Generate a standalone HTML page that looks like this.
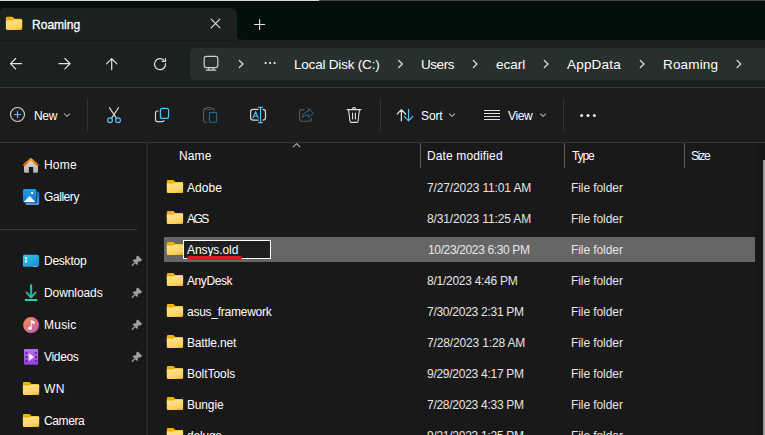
<!DOCTYPE html>
<html><head><meta charset="utf-8"><title>Roaming</title>
<style>
html,body{margin:0;padding:0;background:#191919;}
body{width:765px;height:435px;position:relative;overflow:hidden;font-family:"Liberation Sans", sans-serif;color:#fff;}
.abs{position:absolute;}
.t{position:absolute;white-space:nowrap;line-height:1;}
</style></head><body>
<div class="abs" style="left:0;top:0;width:765px;height:40px;background:#020f0b;"></div>
<div class="abs" style="left:0;top:1px;width:319px;height:1px;background:#010302;"></div>
<div class="abs" style="left:0;top:8px;width:237px;height:32px;background:#1a211e;border-radius:4px 6px 0 0;"></div>
<div class="abs" style="left:237px;top:36px;width:4px;height:4px;background:radial-gradient(circle at 100% 0,#020f0b 3.5px,#1a211e 4.5px);"></div>
<div class="abs" style="left:0;top:0;width:319px;height:1px;background:#d8d8da;"></div>
<div class="abs" style="left:319px;top:0;width:446px;height:1px;background:#484848;"></div>
<div class="abs" style="left:0;top:40px;width:765px;height:47px;background:#1a211e;"></div>
<div class="abs" style="left:0;top:40px;width:238px;height:1px;background:#131b18;"></div>
<div class="abs" style="left:190px;top:48px;width:585px;height:32px;background:#28302d;border-radius:5px;"></div>
<div class="abs" style="left:0;top:87px;width:765px;height:1px;background:#3a3c3b;"></div>
<div class="abs" style="left:0;top:88px;width:765px;height:54px;background:#1c1c1c;"></div>
<div class="abs" style="left:0;top:142px;width:765px;height:1px;background:#353535;"></div>
<div class="abs" style="left:0;top:143px;width:765px;height:292px;background:#191919;"></div>
<div class="abs" style="left:145px;top:143px;width:1px;height:292px;background:#131313;"></div>
<div class="abs" style="left:146px;top:143px;width:2px;height:292px;background:#272727;"></div>
<div class="abs" style="left:0;top:229px;width:137px;height:1px;background:#3a3a3a;"></div>
<div class="abs" style="left:420px;top:143px;width:1px;height:25px;background:#5a5a5a;"></div>
<div class="abs" style="left:564px;top:143px;width:1px;height:25px;background:#5a5a5a;"></div>
<div class="abs" style="left:684px;top:143px;width:1px;height:25px;background:#5a5a5a;"></div>
<div class="abs" style="left:164px;top:237px;width:591px;height:25px;background:#666666;"></div>
<div class="abs" style="left:755px;top:143px;width:10px;height:292px;background:#171717;"></div>
<div class="abs" style="left:763px;top:160px;width:2px;height:275px;background:#9c9c9c;"></div>
<div class="abs" style="left:183px;top:240px;width:86px;height:17px;border:1px solid #fff;background:#1f1f1f;"></div>
<svg class="abs" style="left:0;top:0" width="765" height="435" viewBox="0 0 765 435" fill="none" stroke-linecap="round" stroke-linejoin="round">
<defs>
<linearGradient id="fTab" x1="0" y1="0" x2="0" y2="1"><stop offset="0" stop-color="#f5b400"/><stop offset="1" stop-color="#e9a600"/></linearGradient>
<linearGradient id="fBody" x1="0.2" y1="0" x2="0.6" y2="1"><stop offset="0" stop-color="#ffe597"/><stop offset="0.88" stop-color="#ffd158"/><stop offset="1" stop-color="#f3b637"/></linearGradient>
<linearGradient id="gRoof" x1="0" y1="0" x2="0" y2="1"><stop offset="0" stop-color="#ff9d1c"/><stop offset="1" stop-color="#e8620a"/></linearGradient>
<linearGradient id="gHouse" x1="0" y1="0" x2="0" y2="1"><stop offset="0" stop-color="#dedede"/><stop offset="1" stop-color="#b2b2b2"/></linearGradient>
<linearGradient id="gGal" x1="0" y1="0" x2="0" y2="1"><stop offset="0" stop-color="#22a0ea"/><stop offset="1" stop-color="#1273d0"/></linearGradient>
<linearGradient id="gGalB" x1="0" y1="0" x2="0" y2="1"><stop offset="0" stop-color="#1668c8"/><stop offset="1" stop-color="#4a9dea"/></linearGradient>
<linearGradient id="gDesk" x1="0" y1="0" x2="1" y2="1"><stop offset="0" stop-color="#35cdee"/><stop offset="1" stop-color="#1687cf"/></linearGradient>
<linearGradient id="gDl" x1="0" y1="0" x2="0" y2="1"><stop offset="0" stop-color="#30d0a0"/><stop offset="0.75" stop-color="#1fa8a8"/><stop offset="1" stop-color="#2fd0a0"/></linearGradient>
<linearGradient id="gMus" x1="0" y1="0" x2="1" y2="1"><stop offset="0.1" stop-color="#f28e55"/><stop offset="0.9" stop-color="#c45cb4"/></linearGradient>
<linearGradient id="gVid" x1="0" y1="0" x2="0" y2="1"><stop offset="0" stop-color="#b774f2"/><stop offset="1" stop-color="#9240da"/></linearGradient>
</defs>
<g transform="translate(5.9,16.8)">
<path d="M0 1.4 Q0 0 1.4 0 H6 Q6.7 0 7.2 .5 L8.6 2 H14.9 Q16.3 2 16.3 3.4 V6 H0 Z" fill="url(#fTab)"/>
<path d="M0 3.7 H5.8 Q6.6 3.7 7.2 3.3 L7.8 2.95 Q8.3 2.7 9 2.7 H15 Q16.3 2.7 16.3 4 V11.8 Q16.3 13.1 15 13.1 H1.3 Q0 13.1 0 11.8 Z" fill="url(#fBody)"/>
</g>
<path d="M211.2 19.2 L219.9 27.9 M219.9 19.2 L211.2 27.9" stroke="#e4e4e4" stroke-width="1.1"/>
<path d="M254.6 24.5 H264.6 M259.6 19.5 V29.5" stroke="#e4e4e4" stroke-width="1.1"/>
<g stroke="#e4e4e4" stroke-width="1.2">
<path d="M21.6 63.6 H10.6 M15.6 58.5 L10.5 63.6 L15.6 68.9"/>
<path d="M58.9 63.6 H70 M64.9 58.5 L70.1 63.6 L64.9 68.9"/>
<path d="M111.7 69.7 V58.8 M106.5 63.8 L111.7 58.6 L116.9 63.8"/>
<path d="M165.5 63.7 A5.5 5.5 0 1 1 163.9 60.2"/>
<path d="M165.5 58.3 V61.3 H161.6" stroke-linecap="butt"/>
</g>
<g stroke="#cfcfcf" stroke-width="1.2"><rect x="204.2" y="56.4" width="13.6" height="11.2" rx="2"/><path d="M206.2 70.1 H215.8 M208.8 67.8 V70 M213.2 67.8 V70"/></g>
<path d="M239.3 60.5 L243 64 L239.3 67.5" stroke="#dcdcdc" stroke-width="1.2"/>
<path d="M398.7 60.5 L402.4 64 L398.7 67.5" stroke="#dcdcdc" stroke-width="1.2"/>
<path d="M473.3 60.5 L477 64 L473.3 67.5" stroke="#dcdcdc" stroke-width="1.2"/>
<path d="M544.3 60.5 L548 64 L544.3 67.5" stroke="#dcdcdc" stroke-width="1.2"/>
<path d="M640.3 60.5 L644 64 L640.3 67.5" stroke="#dcdcdc" stroke-width="1.2"/>
<path d="M737.0999999999999 60.5 L740.8 64 L737.0999999999999 67.5" stroke="#dcdcdc" stroke-width="1.2"/>
<rect x="264.6" y="61.9" width="2" height="2" rx=".6" fill="#e8e8e8"/>
<rect x="269.1" y="61.9" width="2" height="2" rx=".6" fill="#e8e8e8"/>
<rect x="273.6" y="61.9" width="2" height="2" rx=".6" fill="#e8e8e8"/>
<circle cx="17.5" cy="114.5" r="7" stroke="#d6d6d6" stroke-width="1.1"/>
<path d="M14.5 114.5 H20.5 M17.5 111.5 V117.5" stroke="#4cc2ff" stroke-width="1.2"/>
<path d="M64.4 113.8 L67 116.4 L69.6 113.8" stroke="#a8a8a8" stroke-width="1.1"/>
<path d="M449.4 113.8 L452 116.4 L454.6 113.8" stroke="#a8a8a8" stroke-width="1.1"/>
<path d="M540.4 113.8 L543 116.4 L545.6 113.8" stroke="#a8a8a8" stroke-width="1.1"/>
<rect x="87" y="99" width="1" height="32" fill="#333333"/>
<rect x="380" y="99" width="1" height="32" fill="#333333"/>
<rect x="563" y="99" width="1" height="32" fill="#333333"/>
<path d="M109.4 107.6 L116.6 118.4 M118.6 107.6 L111.4 118.4" stroke="#d6d6d6" stroke-width="1.1"/>
<circle cx="110" cy="120.2" r="2.4" stroke="#4cc2ff" stroke-width="1.2"/><circle cx="118" cy="120.2" r="2.4" stroke="#4cc2ff" stroke-width="1.2"/>
<path d="M158 111 H157.4 Q155.5 111 155.5 113 V119.5 Q155.5 121.6 157.6 121.6 H162 Q164 121.6 164 120.4" stroke="#d6d6d6" stroke-width="1.2"/>
<rect x="160.4" y="108.4" width="8.2" height="10" rx="2" stroke="#4cc2ff" stroke-width="1.2"/>
<path d="M206.4 108.6 H205.2 Q203.6 108.6 203.6 110.2 V120.6 Q203.6 122.2 205.2 122.2 H207 M211.6 108.6 H212.8 Q214.4 108.6 214.4 110.2" stroke="#5c5c5c" stroke-width="1.1"/>
<rect x="206.4" y="107.4" width="5.2" height="2.2" rx="1.1" stroke="#5c5c5c" stroke-width="1"/>
<rect x="209.4" y="112.4" width="7.2" height="9.9" rx="1.4" stroke="#236a8e" stroke-width="1.1"/>
<path d="M258 109.4 H253.2 Q250.6 109.4 250.6 112 V117.6 Q250.6 120.2 253.2 120.2 H258 M263 109.4 Q265.5 109.4 265.5 112 V117.6 Q265.5 120.2 263 120.2" stroke="#d6d6d6" stroke-width="1.2"/>
<path d="M260.5 107.6 V122.4 M258.6 107.4 H262.4 M258.6 122.6 H262.4" stroke="#4cc2ff" stroke-width="1.2"/>
<path d="M253 118 L255.6 111.6 L258.2 118 M253.9 116 H257.3" stroke="#4cc2ff" stroke-width="1.1"/>
<path d="M304 109.6 H301.8 Q299.6 109.6 299.6 111.8 V119 Q299.6 121.3 301.8 121.3 H309 Q311.3 121.3 311.3 119 V118" stroke="#585858" stroke-width="1.1"/>
<path d="M308.6 108.6 L313.4 112.9 L308.6 117.4 V114.8 Q304.5 114.6 302.2 117.6 Q303 112 308.6 111.2 Z" stroke="#236a8e" stroke-width="1"/>
<g stroke="#e0e0e0" stroke-width="1.1"><path d="M347 109.6 H361 M352.4 109.4 Q352.4 107.6 354 107.6 Q355.6 107.6 355.6 109.4"/><path d="M348.6 110 L349.9 121 Q350 122.4 351.4 122.4 H356.6 Q358 122.4 358.1 121 L359.4 110"/><path d="M352.6 113 V119 M355.4 113 V119"/></g>
<path d="M401.4 120.8 V109.8 M397.2 114 L401.4 109.6 L405.6 114" stroke="#e0e0e0" stroke-width="1.2"/>
<path d="M408.6 109.4 V120.6 M404.4 116.4 L408.6 120.8 L412.8 116.4" stroke="#4cc2ff" stroke-width="1.2"/>
<rect x="484" y="110.0" width="16" height="1" fill="#e0e0e0"/>
<rect x="484" y="113.0" width="16" height="1" fill="#e0e0e0"/>
<rect x="484" y="116.0" width="16" height="1" fill="#e0e0e0"/>
<rect x="484" y="119.0" width="16" height="1" fill="#e0e0e0"/>
<circle cx="581.6" cy="115.6" r="1.5" fill="#f0f0f0"/>
<circle cx="588" cy="115.6" r="1.5" fill="#f0f0f0"/>
<circle cx="594.4" cy="115.6" r="1.5" fill="#f0f0f0"/>
<path d="M293.3 146.9 L296.6 143.6 L299.9 146.9" stroke="#b0b0b0" stroke-width="1.1"/>
<path d="M24 165 L31 159 L38 165 V171.6 Q38 172.8 36.8 172.8 H33.2 V167 H28.9 V172.8 H25.2 Q24 172.8 24 171.6 Z" fill="url(#gHouse)" stroke="none"/>
<path d="M24.1 165.1 L30.9 159 L37.8 165.1" stroke="url(#gRoof)" stroke-width="2.1" stroke-linecap="round"/>
<rect x="25.6" y="191.4" width="13.6" height="13.6" rx="1.6" fill="url(#gGalB)"/>
<rect x="22.4" y="188.4" width="14.6" height="14.6" rx="2" fill="#141414"/>
<rect x="22.9" y="188.9" width="13.6" height="13.4" rx="1.6" fill="url(#gGal)"/>
<path d="M23.6 202.2 L29.5 195.8 L35.6 202.2 Z" fill="#f4f9ff" stroke="none"/>
<rect x="31" y="192" width="2" height="2" fill="#fff"/>
<rect x="22.9" y="254.8" width="16.1" height="12" rx="1.6" fill="url(#gDesk)"/>
<rect x="25" y="257.2" width="2" height="2" fill="#fff"/><rect x="25" y="260.3" width="2" height="2" fill="#fff"/>
<rect x="33.6" y="266" width="1" height="1" fill="#e8f6ff"/><rect x="35.6" y="266" width="1" height="1" fill="#e8f6ff"/>
<path d="M31.1 285.4 V297 M26.6 292.6 L31.1 297.2 L35.6 292.6" stroke="url(#gDl)" stroke-width="2.1"/>
<rect x="24.9" y="299" width="12.4" height="2" fill="#2fd0a0"/>
<circle cx="31.1" cy="325.1" r="8" fill="url(#gMus)"/>
<ellipse cx="30" cy="328.2" rx="1.9" ry="1.6" fill="#fff"/><path d="M31.3 328.2 V320.6 L34.2 321.8 V323.6 L31.3 322.6" fill="#fff" stroke="#fff" stroke-width=".8"/>
<rect x="24" y="349" width="14.1" height="15.8" rx="1" fill="url(#gVid)"/>
<rect x="25.4" y="352" width="2" height="2" rx=".4" fill="#5b2a96"/><rect x="34.8" y="352" width="2" height="2" rx=".4" fill="#5b2a96"/>
<rect x="25.4" y="356" width="2" height="2" rx=".4" fill="#5b2a96"/><rect x="34.8" y="356" width="2" height="2" rx=".4" fill="#5b2a96"/>
<rect x="25.4" y="360" width="2" height="2" rx=".4" fill="#5b2a96"/><rect x="34.8" y="360" width="2" height="2" rx=".4" fill="#5b2a96"/>
<path d="M29.2 353.8 L34 357 L29.2 360.4 Z" fill="#f4ecff" stroke="#f4ecff" stroke-width=".5"/>
<g transform="translate(22.9,381.9)">
<path d="M0 1.4 Q0 0 1.4 0 H6 Q6.7 0 7.2 .5 L8.6 2 H14.9 Q16.3 2 16.3 3.4 V6 H0 Z" fill="url(#fTab)"/>
<path d="M0 3.7 H5.8 Q6.6 3.7 7.2 3.3 L7.8 2.95 Q8.3 2.7 9 2.7 H15 Q16.3 2.7 16.3 4 V11.8 Q16.3 13.1 15 13.1 H1.3 Q0 13.1 0 11.8 Z" fill="url(#fBody)"/>
</g>
<g transform="translate(22.9,413.9)">
<path d="M0 1.4 Q0 0 1.4 0 H6 Q6.7 0 7.2 .5 L8.6 2 H14.9 Q16.3 2 16.3 3.4 V6 H0 Z" fill="url(#fTab)"/>
<path d="M0 3.7 H5.8 Q6.6 3.7 7.2 3.3 L7.8 2.95 Q8.3 2.7 9 2.7 H15 Q16.3 2.7 16.3 4 V11.8 Q16.3 13.1 15 13.1 H1.3 Q0 13.1 0 11.8 Z" fill="url(#fBody)"/>
</g>
<path transform="translate(139.9,257.7) rotate(45)" fill="#98a0a5" stroke="none" d="M-3.1 .5 Q-3.1 0 -2.6 0 H2.6 Q3.1 0 3.1 .5 V2.2 Q3.1 2.7 2.6 2.7 H1.8 L1.9 4.6 L3.8 7.1 H.6 V11.4 H-.6 V7.1 H-3.8 L-1.9 4.6 L-1.8 2.7 H-2.6 Q-3.1 2.7 -3.1 2.2 Z"/>
<path transform="translate(139.9,289.7) rotate(45)" fill="#98a0a5" stroke="none" d="M-3.1 .5 Q-3.1 0 -2.6 0 H2.6 Q3.1 0 3.1 .5 V2.2 Q3.1 2.7 2.6 2.7 H1.8 L1.9 4.6 L3.8 7.1 H.6 V11.4 H-.6 V7.1 H-3.8 L-1.9 4.6 L-1.8 2.7 H-2.6 Q-3.1 2.7 -3.1 2.2 Z"/>
<path transform="translate(139.9,321.7) rotate(45)" fill="#98a0a5" stroke="none" d="M-3.1 .5 Q-3.1 0 -2.6 0 H2.6 Q3.1 0 3.1 .5 V2.2 Q3.1 2.7 2.6 2.7 H1.8 L1.9 4.6 L3.8 7.1 H.6 V11.4 H-.6 V7.1 H-3.8 L-1.9 4.6 L-1.8 2.7 H-2.6 Q-3.1 2.7 -3.1 2.2 Z"/>
<path transform="translate(139.9,353.7) rotate(45)" fill="#98a0a5" stroke="none" d="M-3.1 .5 Q-3.1 0 -2.6 0 H2.6 Q3.1 0 3.1 .5 V2.2 Q3.1 2.7 2.6 2.7 H1.8 L1.9 4.6 L3.8 7.1 H.6 V11.4 H-.6 V7.1 H-3.8 L-1.9 4.6 L-1.8 2.7 H-2.6 Q-3.1 2.7 -3.1 2.2 Z"/>
<g transform="translate(166.8,179.9)">
<path d="M0 1.4 Q0 0 1.4 0 H6 Q6.7 0 7.2 .5 L8.6 2 H14.9 Q16.3 2 16.3 3.4 V6 H0 Z" fill="url(#fTab)"/>
<path d="M0 3.7 H5.8 Q6.6 3.7 7.2 3.3 L7.8 2.95 Q8.3 2.7 9 2.7 H15 Q16.3 2.7 16.3 4 V11.8 Q16.3 13.1 15 13.1 H1.3 Q0 13.1 0 11.8 Z" fill="url(#fBody)"/>
</g>
<g transform="translate(166.8,210.9)">
<path d="M0 1.4 Q0 0 1.4 0 H6 Q6.7 0 7.2 .5 L8.6 2 H14.9 Q16.3 2 16.3 3.4 V6 H0 Z" fill="url(#fTab)"/>
<path d="M0 3.7 H5.8 Q6.6 3.7 7.2 3.3 L7.8 2.95 Q8.3 2.7 9 2.7 H15 Q16.3 2.7 16.3 4 V11.8 Q16.3 13.1 15 13.1 H1.3 Q0 13.1 0 11.8 Z" fill="url(#fBody)"/>
</g>
<g transform="translate(166.8,241.9)">
<path d="M0 1.4 Q0 0 1.4 0 H6 Q6.7 0 7.2 .5 L8.6 2 H14.9 Q16.3 2 16.3 3.4 V6 H0 Z" fill="url(#fTab)"/>
<path d="M0 3.7 H5.8 Q6.6 3.7 7.2 3.3 L7.8 2.95 Q8.3 2.7 9 2.7 H15 Q16.3 2.7 16.3 4 V11.8 Q16.3 13.1 15 13.1 H1.3 Q0 13.1 0 11.8 Z" fill="url(#fBody)"/>
</g>
<g transform="translate(166.8,272.9)">
<path d="M0 1.4 Q0 0 1.4 0 H6 Q6.7 0 7.2 .5 L8.6 2 H14.9 Q16.3 2 16.3 3.4 V6 H0 Z" fill="url(#fTab)"/>
<path d="M0 3.7 H5.8 Q6.6 3.7 7.2 3.3 L7.8 2.95 Q8.3 2.7 9 2.7 H15 Q16.3 2.7 16.3 4 V11.8 Q16.3 13.1 15 13.1 H1.3 Q0 13.1 0 11.8 Z" fill="url(#fBody)"/>
</g>
<g transform="translate(166.8,303.9)">
<path d="M0 1.4 Q0 0 1.4 0 H6 Q6.7 0 7.2 .5 L8.6 2 H14.9 Q16.3 2 16.3 3.4 V6 H0 Z" fill="url(#fTab)"/>
<path d="M0 3.7 H5.8 Q6.6 3.7 7.2 3.3 L7.8 2.95 Q8.3 2.7 9 2.7 H15 Q16.3 2.7 16.3 4 V11.8 Q16.3 13.1 15 13.1 H1.3 Q0 13.1 0 11.8 Z" fill="url(#fBody)"/>
</g>
<g transform="translate(166.8,334.9)">
<path d="M0 1.4 Q0 0 1.4 0 H6 Q6.7 0 7.2 .5 L8.6 2 H14.9 Q16.3 2 16.3 3.4 V6 H0 Z" fill="url(#fTab)"/>
<path d="M0 3.7 H5.8 Q6.6 3.7 7.2 3.3 L7.8 2.95 Q8.3 2.7 9 2.7 H15 Q16.3 2.7 16.3 4 V11.8 Q16.3 13.1 15 13.1 H1.3 Q0 13.1 0 11.8 Z" fill="url(#fBody)"/>
</g>
<g transform="translate(166.8,365.9)">
<path d="M0 1.4 Q0 0 1.4 0 H6 Q6.7 0 7.2 .5 L8.6 2 H14.9 Q16.3 2 16.3 3.4 V6 H0 Z" fill="url(#fTab)"/>
<path d="M0 3.7 H5.8 Q6.6 3.7 7.2 3.3 L7.8 2.95 Q8.3 2.7 9 2.7 H15 Q16.3 2.7 16.3 4 V11.8 Q16.3 13.1 15 13.1 H1.3 Q0 13.1 0 11.8 Z" fill="url(#fBody)"/>
</g>
<g transform="translate(166.8,396.9)">
<path d="M0 1.4 Q0 0 1.4 0 H6 Q6.7 0 7.2 .5 L8.6 2 H14.9 Q16.3 2 16.3 3.4 V6 H0 Z" fill="url(#fTab)"/>
<path d="M0 3.7 H5.8 Q6.6 3.7 7.2 3.3 L7.8 2.95 Q8.3 2.7 9 2.7 H15 Q16.3 2.7 16.3 4 V11.8 Q16.3 13.1 15 13.1 H1.3 Q0 13.1 0 11.8 Z" fill="url(#fBody)"/>
</g>
<g transform="translate(166.8,427.9)">
<path d="M0 1.4 Q0 0 1.4 0 H6 Q6.7 0 7.2 .5 L8.6 2 H14.9 Q16.3 2 16.3 3.4 V6 H0 Z" fill="url(#fTab)"/>
<path d="M0 3.7 H5.8 Q6.6 3.7 7.2 3.3 L7.8 2.95 Q8.3 2.7 9 2.7 H15 Q16.3 2.7 16.3 4 V11.8 Q16.3 13.1 15 13.1 H1.3 Q0 13.1 0 11.8 Z" fill="url(#fBody)"/>
</g>
</svg>
<div class="t" style="left:32px;top:19px;font-size:12px;color:#ffffff;letter-spacing:0.02px;-webkit-text-stroke:0.3px #fff;">Roaming</div>
<div class="t" style="left:294px;top:58px;font-size:13.5px;color:#ffffff;letter-spacing:-0.2px;">Local Disk (C:)</div>
<div class="t" style="left:421px;top:58px;font-size:13.5px;color:#ffffff;letter-spacing:-0.45px;">Users</div>
<div class="t" style="left:496px;top:58px;font-size:13.5px;color:#ffffff;letter-spacing:0.02px;">ecarl</div>
<div class="t" style="left:567px;top:58px;font-size:13.5px;color:#ffffff;letter-spacing:0.2px;">AppData</div>
<div class="t" style="left:663px;top:58px;font-size:13.5px;color:#ffffff;letter-spacing:0.17px;">Roaming</div>
<div class="t" style="left:34px;top:110px;font-size:12px;color:#ffffff;letter-spacing:-0.35px;">New</div>
<div class="t" style="left:421px;top:110px;font-size:12px;color:#ffffff;letter-spacing:-0.12px;">Sort</div>
<div class="t" style="left:508px;top:110px;font-size:12px;color:#ffffff;letter-spacing:-0.38px;">View</div>
<div class="t" style="left:44px;top:159px;font-size:12px;color:#ffffff;letter-spacing:0.2px;">Home</div>
<div class="t" style="left:44px;top:191px;font-size:12px;color:#ffffff;letter-spacing:-0.43px;">Gallery</div>
<div class="t" style="left:44px;top:255px;font-size:12px;color:#ffffff;letter-spacing:-0.24px;">Desktop</div>
<div class="t" style="left:44px;top:287px;font-size:12px;color:#ffffff;letter-spacing:-0.09px;">Downloads</div>
<div class="t" style="left:44px;top:319px;font-size:12px;color:#ffffff;letter-spacing:0.23px;">Music</div>
<div class="t" style="left:44px;top:351px;font-size:12px;color:#ffffff;letter-spacing:-0.32px;">Videos</div>
<div class="t" style="left:44px;top:383px;font-size:12px;color:#ffffff;letter-spacing:0.31px;">WN</div>
<div class="t" style="left:44px;top:415px;font-size:12px;color:#ffffff;letter-spacing:-0.4px;">Camera</div>
<div class="t" style="left:179px;top:150px;font-size:12px;color:#ffffff;letter-spacing:0.13px;">Name</div>
<div class="t" style="left:427px;top:150px;font-size:12px;color:#ffffff;letter-spacing:0.13px;">Date modified</div>
<div class="t" style="left:572px;top:150px;font-size:12px;color:#ffffff;letter-spacing:-1.14px;">Type</div>
<div class="t" style="left:691px;top:150px;font-size:12px;color:#ffffff;letter-spacing:-1.25px;">Size</div>
<div class="t" style="left:187px;top:182px;font-size:12px;color:#ffffff;letter-spacing:0.07px;">Adobe</div>
<div class="t" style="left:427px;top:182px;font-size:12px;color:#e6e6e6;letter-spacing:-0.13px;">7/27/2023 11:01 AM</div>
<div class="t" style="left:571px;top:182px;font-size:12px;color:#e6e6e6;letter-spacing:-0.08px;">File folder</div>
<div class="t" style="left:187px;top:213px;font-size:12px;color:#ffffff;letter-spacing:-1.55px;">AGS</div>
<div class="t" style="left:427px;top:213px;font-size:12px;color:#e6e6e6;letter-spacing:-0.14px;">8/31/2023 11:25 AM</div>
<div class="t" style="left:571px;top:213px;font-size:12px;color:#e6e6e6;letter-spacing:-0.08px;">File folder</div>
<div class="t" style="left:187px;top:244px;font-size:12px;color:#ffffff;letter-spacing:-0.09px;">Ansys.old</div>
<div class="t" style="left:428px;top:244px;font-size:12px;color:#e6e6e6;letter-spacing:-0.36px;">10/23/2023 6:30 PM</div>
<div class="t" style="left:571px;top:244px;font-size:12px;color:#e6e6e6;letter-spacing:-0.08px;">File folder</div>
<div class="t" style="left:187px;top:275px;font-size:12px;color:#ffffff;letter-spacing:-0.41px;">AnyDesk</div>
<div class="t" style="left:427px;top:275px;font-size:12px;color:#e6e6e6;letter-spacing:-0.26px;">8/1/2023 4:46 PM</div>
<div class="t" style="left:571px;top:275px;font-size:12px;color:#e6e6e6;letter-spacing:-0.08px;">File folder</div>
<div class="t" style="left:187px;top:306px;font-size:12px;color:#ffffff;letter-spacing:-0.25px;">asus_framework</div>
<div class="t" style="left:427px;top:306px;font-size:12px;color:#e6e6e6;letter-spacing:-0.27px;">7/30/2023 2:31 PM</div>
<div class="t" style="left:571px;top:306px;font-size:12px;color:#e6e6e6;letter-spacing:-0.08px;">File folder</div>
<div class="t" style="left:187px;top:337px;font-size:12px;color:#ffffff;letter-spacing:-0.16px;">Battle.net</div>
<div class="t" style="left:427px;top:337px;font-size:12px;color:#e6e6e6;letter-spacing:-0.15px;">7/28/2023 1:28 AM</div>
<div class="t" style="left:571px;top:337px;font-size:12px;color:#e6e6e6;letter-spacing:-0.08px;">File folder</div>
<div class="t" style="left:187px;top:368px;font-size:12px;color:#ffffff;letter-spacing:-0.04px;">BoltTools</div>
<div class="t" style="left:427px;top:368px;font-size:12px;color:#e6e6e6;letter-spacing:-0.27px;">9/29/2023 4:17 PM</div>
<div class="t" style="left:571px;top:368px;font-size:12px;color:#e6e6e6;letter-spacing:-0.08px;">File folder</div>
<div class="t" style="left:187px;top:399px;font-size:12px;color:#ffffff;letter-spacing:-0.16px;">Bungie</div>
<div class="t" style="left:427px;top:399px;font-size:12px;color:#e6e6e6;letter-spacing:-0.27px;">7/28/2023 4:33 PM</div>
<div class="t" style="left:571px;top:399px;font-size:12px;color:#e6e6e6;letter-spacing:-0.08px;">File folder</div>
<div class="t" style="left:187px;top:430px;font-size:12px;color:#ffffff;letter-spacing:-0.2px;">deluge</div>
<div class="t" style="left:427px;top:430px;font-size:12px;color:#e6e6e6;letter-spacing:-0.27px;">9/21/2023 1:25 PM</div>
<div class="t" style="left:571px;top:430px;font-size:12px;color:#e6e6e6;letter-spacing:-0.08px;">File folder</div>
<div class="abs" style="left:187px;top:255.8px;width:55px;height:4px;border-radius:2px;background:#df1a1e;"></div>
</body></html>
